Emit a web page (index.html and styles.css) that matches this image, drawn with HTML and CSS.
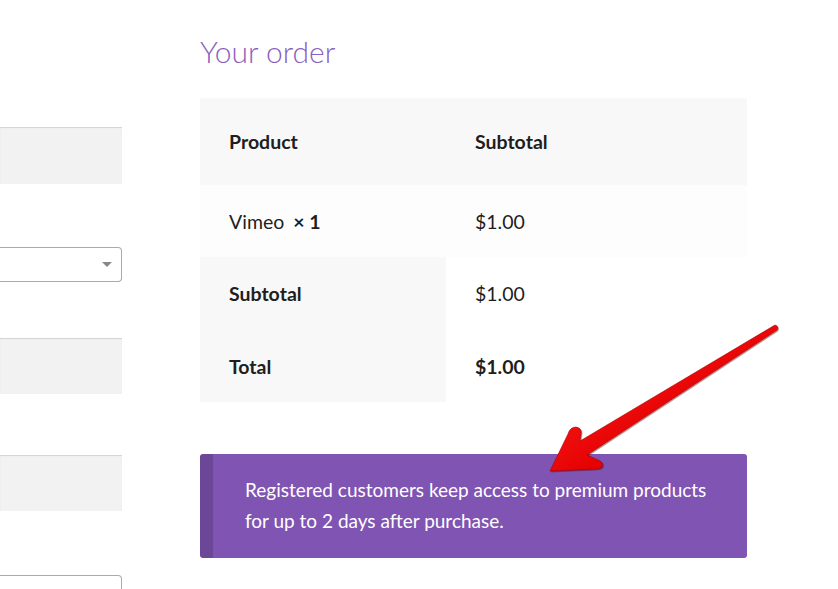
FILE: index.html
```html
<!DOCTYPE html>
<html lang="en">
<head>
<meta charset="utf-8">
<title>Checkout</title>
<link rel="stylesheet" href="styles.css">
</head>
<body>
<div class="page">
  <div class="billing">
    <div class="field input f1"></div>
    <div class="field select f2"><span class="caret"></span></div>
    <div class="field input f3"></div>
    <div class="field input f4"></div>
    <div class="field select f5"></div>
  </div>
  <div class="order">
    <h3 class="order-title">Your order</h3>
    <table class="order-table">
      <thead>
        <tr class="row-head">
          <th class="col-name">Product</th>
          <th class="col-total">Subtotal</th>
        </tr>
      </thead>
      <tbody>
        <tr class="row-item">
          <td class="col-name">Vimeo <strong class="qty">×&nbsp;1</strong></td>
          <td class="col-total">$1.00</td>
        </tr>
      </tbody>
      <tfoot>
        <tr class="row-foot">
          <th class="col-name">Subtotal</th>
          <td class="col-total">$1.00</td>
        </tr>
        <tr class="row-foot">
          <th class="col-name">Total</th>
          <td class="col-total"><strong>$1.00</strong></td>
        </tr>
      </tfoot>
    </table>
    <div class="notice">Registered customers keep access to premium products for up to 2 days after purchase.</div>
  </div>
</div>
<svg class="annot" width="838" height="589" viewBox="0 0 838 589" aria-hidden="true">
  <defs>
    <linearGradient id="red" x1="0" y1="0" x2="1" y2="1">
      <stop offset="0" stop-color="#ff2a2a"/>
      <stop offset="0.6" stop-color="#e60000"/>
      <stop offset="1" stop-color="#c40000"/>
    </linearGradient>
  </defs>
  <path class="arrow" d="M550,471 L568,434 Q570,427 576,427 Q582,428 581,434 L580,441 L775,325 Q779,326 777,330 L587,455 L598,460 Q604,462 602,467 Q600,469 596,469 Z" fill="url(#red)"/>
</svg>
</body>
</html>
```
FILE: styles.css
```css
html, body {
  margin: 0;
  padding: 0;
  background: #fff;
}
body {
  font-family: Lato, "Liberation Sans", sans-serif;
  color: #1e1e1e;
  width: 838px;
  height: 589px;
  overflow: hidden;
  position: relative;
}
.page {
  display: flex;
  align-items: flex-start;
}
.billing {
  width: 122px;
  flex: none;
  display: flex;
  flex-direction: column;
}
.field {
  box-sizing: border-box;
  width: 122px;
}
.input {
  background: #f2f2f2;
  box-shadow: inset 0 1px 1px rgba(0, 0, 0, 0.13);
  height: 57px;
}
.select {
  border: 1px solid #aaa;
  border-left: none;
  border-radius: 0 4px 4px 0;
  background: #fff;
  height: 35px;
  position: relative;
}
.f1 { margin-top: 127px; }
.f2 { margin-top: 63px; }
.f3 { margin-top: 56px; height: 56px; }
.f4 { margin-top: 61px; height: 56px; }
.f5 { margin-top: 64px; height: 40px; }
.caret {
  position: absolute;
  right: 9px;
  top: 14px;
  width: 0;
  height: 0;
  border-left: 5px solid transparent;
  border-right: 5px solid transparent;
  border-top: 5px solid #888;
}
.order {
  margin-left: 78px;
  width: 547px;
  flex: none;
  padding-top: 33px;
}
.order-title {
  margin: 0 0 29px;
  font-size: 30px;
  line-height: 36px;
  font-weight: 300;
  color: #8a5fbd;
}
.order-table {
  width: 547px;
  border-collapse: collapse;
  border-spacing: 0;
  font-size: 19.5px;
}
.order-table th,
.order-table td {
  padding: 0 0 0 29px;
  text-align: left;
  vertical-align: middle;
}
.order-table th { font-weight: 700; }
.order-table strong { font-weight: 700; }
.qty { margin-left: 4px; }
.col-name { width: 217px; }
.row-head { height: 87px; background: #f8f8f8; }
.row-item { height: 72px; background: #fdfdfd; }
.row-foot { height: 72px; }
.row-foot:first-child { height: 73px; }
.row-foot th { background: #f8f8f8; }
.row-foot td { background: #fff; }
.notice {
  margin-top: 52px;
  background: #7f54b3;
  border-left: 13px solid rgba(0, 0, 0, 0.15);
  border-radius: 3px;
  color: #fff;
  font-size: 19px;
  line-height: 31px;
  padding: 20px 20px 22px 32px;
}
.annot {
  position: absolute;
  left: 0;
  top: 0;
  pointer-events: none;
}
.arrow {
  stroke: #b00000;
  stroke-width: 0.6;
  filter: drop-shadow(1px 1px 0.6px rgba(90, 0, 0, 0.45));
}
```
